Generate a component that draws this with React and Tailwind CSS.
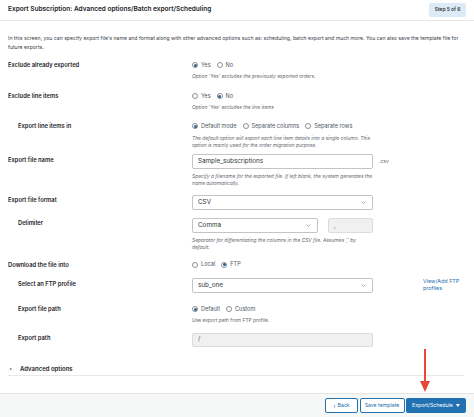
import React from "react";

const Radio = ({ checked, label }) => (
  <span className="flex items-center gap-[3px] mr-[6px]">
    <span className="w-[6px] h-[6px] rounded-full border-[0.8px] border-[#8c8f94] bg-white flex items-center justify-center">
      {checked && <span className="w-[3px] h-[3px] rounded-full bg-[#2f5f8f]" />}
    </span>
    <span className="text-[5.6px] text-[#50575e]">{label}</span>
  </span>
);

const Chevron = () => (
  <svg width="5" height="3" viewBox="0 0 10 6" fill="none">
    <path d="M1 1l4 4 4-4" stroke="#8c8f94" strokeWidth="1.4" />
  </svg>
);

const Select = ({ value, width = "w-[181px]" }) => (
  <div className={`${width} h-[15px] border-[0.8px] border-[#c3c4c7] rounded-[2px] bg-white flex items-center justify-between pl-[5px] pr-[6px] text-[6.3px] text-[#2c3338]`}>
    <span>{value}</span>
    <Chevron />
  </div>
);

const Help = ({ children, className = "" }) => (
  <p className={`text-[4.9px] italic text-[#646970] leading-[7px] ${className}`}>{children}</p>
);

const Row = ({ label, sub, labelPt = "pt-0", className = "", children }) => (
  <div className={`flex items-start ${className}`}>
    <div
      className={`w-[184px] shrink-0 text-[5.8px] font-semibold text-[#1d2327] leading-[8px] ${sub ? "pl-[10px]" : ""} ${labelPt}`}
    >
      {label}
    </div>
    <div className="flex-1">{children}</div>
  </div>
);

export default function App() {
  return (
    <div
      className="relative w-[474px] h-[417px] overflow-hidden bg-white flex flex-col"
      style={{ fontFamily: "Inter, 'Noto Sans', sans-serif" }}
    >
      <div className="h-[21px] flex items-center justify-between px-[8px] border-b border-[#e8e8e8] shrink-0">
        <h1 className="text-[6.5px] font-semibold text-[#1d2327]">
          Export Subscription: Advanced options/Batch export/Scheduling
        </h1>
        <span className="h-[14px] w-[37px] rounded-[2px] bg-[#dcebf5] text-[4.9px] font-semibold text-[#2c3338] flex items-center justify-center">
          Step 5 of 6
        </span>
      </div>

      <div className="px-[8px]">
        <p className="mt-[12.5px] text-[5.15px] leading-[9px] text-[#3c434a]">
          In this screen, you can specify export file's name and format along with other advanced options such as: scheduling, batch export and much more. You can also save the template file for future exports.
        </p>

        <Row label="Exclude already exported" className="mt-[9.5px]">
          <div className="flex items-center h-[8px]">
            <Radio checked label="Yes" />
            <Radio label="No" />
          </div>
          <Help className="mt-[4px]">Option 'Yes' excludes the previously exported orders.</Help>
        </Row>

        <Row label="Exclude line items" className="mt-[12px]">
          <div className="flex items-center h-[8px]">
            <Radio label="Yes" />
            <Radio checked label="No" />
          </div>
          <Help className="mt-[4px]">Option 'Yes' excludes the line items</Help>
        </Row>

        <Row label="Export line items in" sub className="mt-[11px]">
          <div className="flex items-center h-[8px]">
            <Radio checked label="Default mode" />
            <Radio label="Separate columns" />
            <Radio label="Separate rows" />
          </div>
          <Help className="mt-[4.5px] w-[181px]">
            The default option will export each line item details into a single column. This option is mainly used for the order migration purpose.
          </Help>
        </Row>

        <Row label="Export file name" labelPt="pt-[2px]" className="mt-[5.5px]">
          <div className="flex items-center">
            <div className="w-[181px] h-[15px] border-[0.8px] border-[#c3c4c7] rounded-[2px] bg-white flex items-center pl-[5px] text-[6.3px] text-[#2c3338]">
              Sample_subscriptions
            </div>
            <span className="ml-[6px] text-[5px] text-[#646970]">.csv</span>
          </div>
          <Help className="mt-[4px] w-[181px]">
            Specify a filename for the exported file. If left blank, the system generates the name automatically.
          </Help>
        </Row>

        <Row label="Export file format" labelPt="pt-[1px]" className="mt-[8px]">
          <Select value="CSV" />
        </Row>

        <Row label="Delimiter" sub labelPt="pt-[1px]" className="mt-[8px]">
          <div className="flex items-center gap-[10px]">
            <Select value="Comma" width="w-[126px]" />
            <div className="w-[45px] h-[15px] border-[0.8px] border-[#dcdcde] rounded-[2px] bg-[#f0f0f1] flex items-center pl-[5px] text-[6px] text-[#50575e]">
              ,
            </div>
          </div>
          <Help className="mt-[3.5px] w-[181px]">
            Separator for differentiating the columns in the CSV file. Assumes ',' by default.
          </Help>
        </Row>

        <Row label="Download the file into" className="mt-[10px]">
          <div className="flex items-center h-[8px]">
            <Radio label="Local" />
            <Radio checked label="FTP" />
          </div>
        </Row>

        <Row label="Select an FTP profile" sub labelPt="pt-[2px]" className="mt-[9.5px]">
          <div className="flex items-start">
            <Select value="sub_one" />
            <a className="ml-[50px] w-[42px] text-[5.4px] leading-[7px] text-[#2271b1] cursor-pointer">
              View/Add FTP profiles
            </a>
          </div>
        </Row>

        <Row label="Export file path" sub className="mt-[12px]">
          <div className="flex items-center h-[8px]">
            <Radio checked label="Default" />
            <Radio label="Custom" />
          </div>
          <p className="mt-[4px] text-[4.9px] leading-[6px] text-[#646970]">Use export path from FTP profile.</p>
        </Row>

        <Row label="Export path" sub labelPt="pt-[1.5px]" className="mt-[9.5px]">
          <div className="w-[181px] h-[14px] border-[0.8px] border-[#dcdcde] rounded-[2px] bg-[#f0f0f1] flex items-center pl-[5px] text-[6.3px] text-[#50575e]">
            /
          </div>
        </Row>

        <div className="mt-[18.5px] mr-[2px] pb-[2px] border-b border-[#e8e8e8] flex items-center leading-[8px]">
          <span className="w-[12px] pl-[2px] text-[4px] text-[#50575e]">▸</span>
          <span className="text-[6px] font-semibold text-[#1d2327]">Advanced options</span>
        </div>
      </div>

      <div className="mt-auto h-[24px] bg-[#f6f7f7] border-t border-[#e5e5e5] flex items-center justify-end gap-[1.5px] pr-[8px] shrink-0">
        <button className="h-[15px] w-[33px] border-[0.8px] border-[#2271b1] rounded-[2px] bg-white text-[5.2px] text-[#2271b1] flex items-center justify-center gap-[2px]">
          <span className="text-[6px]">‹</span> Back
        </button>
        <button className="h-[15px] w-[45px] border-[0.8px] border-[#2271b1] rounded-[2px] bg-white text-[5.2px] text-[#2271b1] flex items-center justify-center">
          Save template
        </button>
        <button className="h-[15px] w-[60px] rounded-[2px] bg-[#2271b1] text-[5.2px] text-white flex items-center justify-center gap-[3px]">
          Export/Schedule <span className="text-[4px]">▼</span>
        </button>
      </div>

      <svg className="absolute left-[419px] top-[349px]" width="12" height="44" viewBox="0 0 12 44">
        <line x1="6" y1="0" x2="6" y2="34" stroke="#e8473c" strokeWidth="2" />
        <path d="M1 32 L6 43 L11 32 Z" fill="#e8473c" />
      </svg>
    </div>
  );
}
